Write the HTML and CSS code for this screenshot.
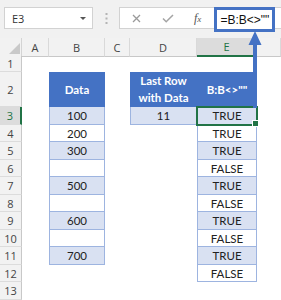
FILE: index.html
```html
<!doctype html>
<html lang="en">
	<head>
		<meta charset="utf-8">
		<title>B:B&lt;&gt;""</title>
		<link rel="stylesheet" href="styles.css">
	</head>
	<body>
	<!-- formula bar -->
	<div class="bar">
		<div class="namebox"><span>E3</span><span class="caret"></span></div>
		<div class="dots">
			<svg width="3" height="11" viewBox="0 0 3 11"><rect x="0.5" y="0" width="2" height="2" fill="#b4b4b4"/><rect x="0.5" y="4.5" width="2" height="2" fill="#b4b4b4"/><rect x="0.5" y="9" width="2" height="2" fill="#b4b4b4"/></svg>
		</div>
		<div class="fbox">
			<svg class="ico-x" width="9" height="9" viewBox="0 0 9 9"><path d="M1 1L8 8M8 1L1 8" stroke="#9a9a9a" stroke-width="1.3" fill="none"/></svg>
			<svg class="ico-ok" width="12" height="9" viewBox="0 0 12 9"><path d="M1 4.5L4.2 7.8L11 1" stroke="#a4a4a4" stroke-width="1.5" fill="none"/></svg>
			<span class="fx">f<small>x</small></span>
			<div class="formula">=B:B&lt;&gt;""</div>
		</div>
	</div>

	<!-- sheet -->
	<div class="sheet">
		<div class="row hdr">
			<div class="corner"><svg width="22" height="18" viewBox="0 0 22 18"><path d="M9 16L20 5L20 16Z" fill="#c9c9c9"/></svg></div>
			<div class="ch">A</div>
			<div class="ch">B</div>
			<div class="ch">C</div>
			<div class="ch">D</div>
			<div class="ch on">E</div>
			<div class="ch"></div>
		</div>
		<div class="row h16">
			<div class="rh">1</div>
		</div>
		<div class="row h35">
			<div class="rh">2</div><div></div>
			<div class="t th">Data</div><div></div>
			<div class="t th">Last Row<br>with Data</div>
			<div class="t th">B:B&lt;&gt;""</div>
		</div>
		<div class="row h18">
			<div class="rh on">3</div><div></div>
			<div class="t b">100</div><div></div>
			<div class="t b">11</div>
			<div class="t b sel">TRUE</div>
		</div>
		<div class="row h17">
			<div class="rh">4</div><div></div>
			<div class="t">200</div><div></div><div></div>
			<div class="t">TRUE</div>
		</div>
		<div class="row h18">
			<div class="rh">5</div><div></div>
			<div class="t b">300</div><div></div><div></div>
			<div class="t b">TRUE</div>
		</div>
		<div class="row h17">
			<div class="rh">6</div><div></div>
			<div class="t"></div><div></div><div></div>
			<div class="t">FALSE</div>
		</div>
		<div class="row h18">
			<div class="rh">7</div><div></div>
			<div class="t b">500</div><div></div><div></div>
			<div class="t b">TRUE</div>
		</div>
		<div class="row h17">
			<div class="rh">8</div><div></div>
			<div class="t"></div><div></div><div></div>
			<div class="t">FALSE</div>
		</div>
		<div class="row h18">
			<div class="rh">9</div><div></div>
			<div class="t b">600</div><div></div><div></div>
			<div class="t b">TRUE</div>
		</div>
		<div class="row h17">
			<div class="rh">10</div><div></div>
			<div class="t"></div><div></div><div></div>
			<div class="t">FALSE</div>
		</div>
		<div class="row h18">
			<div class="rh">11</div><div></div>
			<div class="t b">700</div><div></div><div></div>
			<div class="t b">TRUE</div>
		</div>
		<div class="row h17">
			<div class="rh">12</div><div></div>
			<div></div><div></div><div></div>
			<div class="t">FALSE</div>
		</div>
		<div class="row h18">
			<div class="rh">13</div>
		</div>
	</div>

	<!-- arrow from formula to E3 -->
	<svg class="arrow" width="14" height="78" viewBox="0 0 14 78"><path d="M7 0L13.5 14L9 14L9 77L5 77L5 14L0.5 14Z" fill="#4472c4"/></svg>
	</body>
</html>
```

FILE: styles.css
```css
*{margin: 0;padding: 0;box-sizing: border-box;}
body{
	position: relative;
	width: 281px;
	height: 300px;
	overflow: hidden;
	background: #fff;
	font-family: "Open Sans", "Noto Sans", sans-serif;
}

/* formula bar */
.bar{
	display: flex;
	align-items: flex-start;
	height: 38px;
	padding: 7px 0 0 4px;
	background: #f1f1f1;
}
.namebox{
	display: flex;
	align-items: center;
	justify-content: space-between;
	width: 89px;
	height: 22px;
	padding: 0 6px 0 7px;
	background: #fff;
	border: 1px solid #d2d2d2;
	font-size: 11px;
	color: #333;
}
.caret{
	border-left: 3px solid transparent;
	border-right: 3px solid transparent;
	border-top: 3px solid #555;
}
.dots{
	display: flex;
	align-items: center;
	justify-content: center;
	width: 26px;
	height: 22px;
}
.fbox{
	display: flex;
	align-items: center;
	flex: 1;
	height: 22px;
	padding-left: 12px;
	background: #fff;
	border: 1px solid #d2d2d2;
	border-right: 0;
}
.ico-ok{margin-left: 21px;}
.fx{
	margin-left: 20px;
	font-family: "Liberation Serif", serif;
	font-style: italic;
	font-size: 12px;
	color: #555;
}
.fx small{font-size: 9px;}
.formula{
	display: flex;
	align-items: center;
	justify-content: center;
	align-self: flex-start;
	width: 61px;
	height: 25px;
	margin: -1px 0 0 13px;
	border: 3px solid #4472c4;
	font-family: "Liberation Sans", sans-serif;
	font-size: 12px;
	color: #111;
	background: #fff;
}

/* grid */
.row{
	display: grid;
	grid-template-columns: 22px 27px 56px 25px 67px 60px 1fr;
}
.h16{height: 16px;}
.h17{height: 17px;}
.h18{height: 18px;}
.h35{height: 35px;}

.hdr{height: 18px;background: #f2f2f2;}
.corner{border-right: 1px solid #d4d4d4;border-bottom: 1px solid #c8c8c8;}
.corner svg{display: block;}
.ch{
	display: flex;
	align-items: center;
	justify-content: center;
	border-right: 1px solid #d9d9d9;
	border-bottom: 1px solid #c8c8c8;
	font-size: 11px;
	color: #444;
}
.ch.on{
	background: #dcdcdc;
	border-bottom: 2px solid #217346;
	color: #217346;
}
.rh{
	display: flex;
	align-items: center;
	justify-content: center;
	background: #f2f2f2;
	border-right: 1px solid #c8c8c8;
	border-bottom: 1px solid #dcdcdc;
	font-size: 11px;
	color: #444;
}
.rh.on{
	background: #dcdcdc;
	border-right: 2px solid #217346;
	color: #217346;
}

/* tables */
.t{
	display: flex;
	align-items: center;
	justify-content: center;
	border: 1px solid #9db4e0;
	border-top: 0;
	font-family: Lato, "Liberation Sans", sans-serif;
	font-size: 11.5px;
	color: #222;
	background: #fff;
}
.t.b{background: #d9e1f2;}
.t.th{
	background: #4472c4;
	border-color: #4472c4;
	color: #fff;
	font-weight: bold;
	line-height: 17px;
	text-align: center;
}
.sel{
	position: relative;
	outline: 2px solid #217346;
	outline-offset: -1px;
}
.sel:after{
	content: "";
	position: absolute;
	right: -3px;
	bottom: -3px;
	width: 5px;
	height: 5px;
	background: #217346;
	border: 1px solid #fff;
}

.arrow{
	position: absolute;
	left: 248px;
	top: 31px;
}
```
